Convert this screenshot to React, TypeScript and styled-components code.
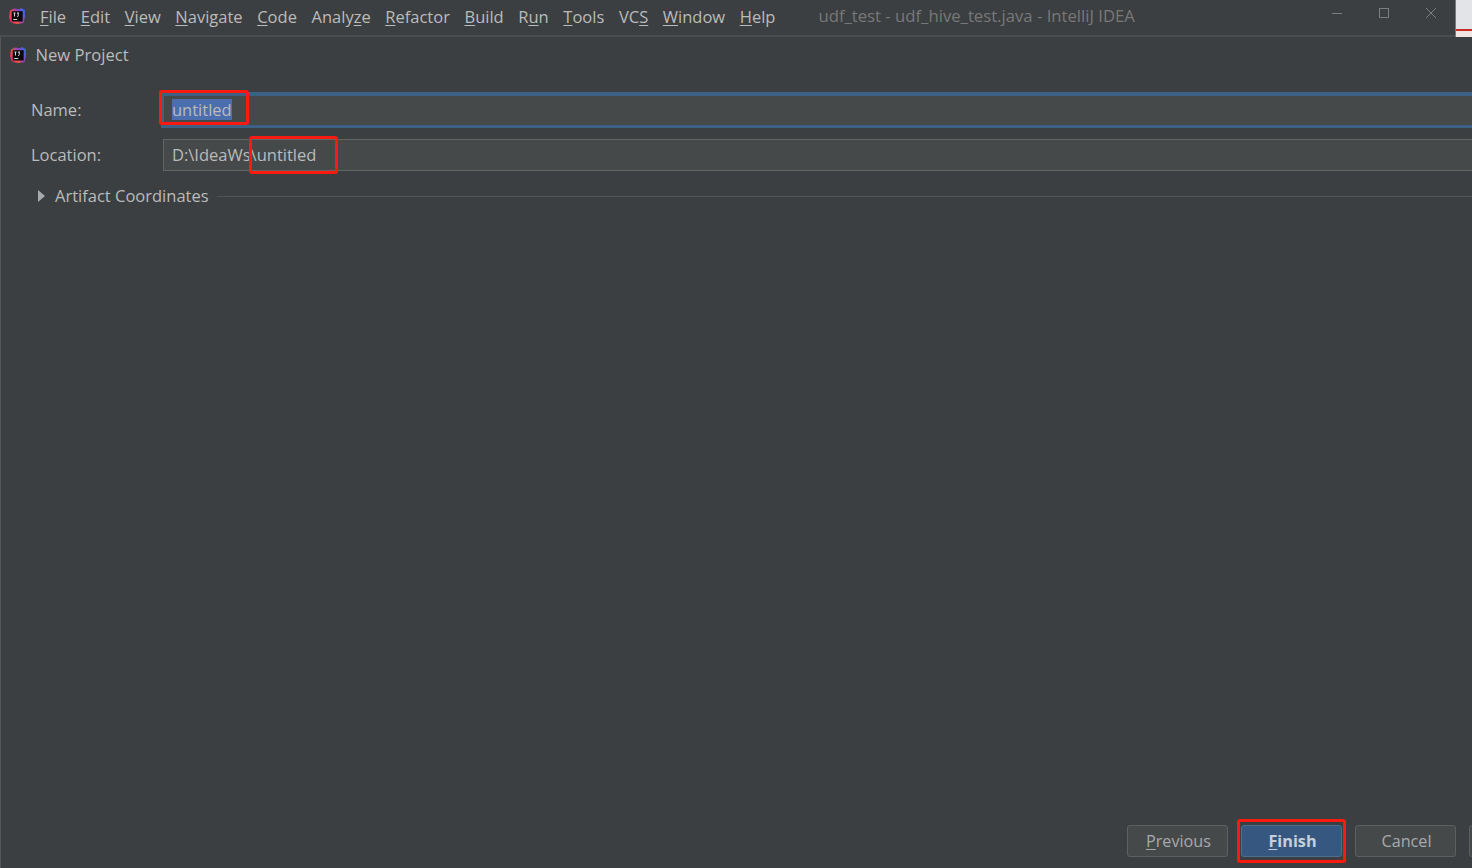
import React from "react";
import styled, { createGlobalStyle } from "styled-components";

const Global = createGlobalStyle`
  html, body { margin: 0; padding: 0; background: #3c3f41; }
  body { font-family: "Open Sans", "Noto Sans", "Liberation Sans", sans-serif; }
`;

const Page = styled.div`
  width: 1472px;
  height: 868px;
  overflow: hidden;
  display: flex;
  flex-direction: column;
  background: #3c3f41;
  color: #bbbbbb;
  font-size: 16.5px;
`;

const TitleBar = styled.header`
  height: 35px;
  flex: none;
  display: flex;
  align-items: flex-start;
  border-bottom: 2px solid #4a4c4e;
  padding-left: 9px;
`;

const AppIcon = styled.svg`
  width: 16px;
  height: 16px;
  flex: none;
  display: block;
`;

const BarIconSlot = styled.div`
  margin-top: 8px;
  width: 31px;
  flex: none;
`;

const Menu = styled.nav`
  display: flex;
  gap: 14.6px;
  height: 33px;
  align-items: center;
`;

const MenuItem = styled.span`
  white-space: nowrap;
`;

const Key = styled.span`
  text-decoration: underline;
  text-underline-offset: 2px;
  text-decoration-thickness: 1px;
`;

const WindowTitle = styled.span`
  margin-left: 43px;
  color: #787878;
  white-space: nowrap;
  line-height: 31px;
  font-size: 16.7px;
`;

const WindowControls = styled.div`
  margin-left: auto;
  display: flex;
  gap: 37px;
  margin-top: 8px;
  margin-right: 19px;
`;

const ControlIcon = styled.svg`
  width: 10px;
  height: 10px;
  display: block;
  stroke: #7b7d7f;
  stroke-width: 1;
  fill: none;
`;

const BehindWindow = styled.div`
  width: 17px;
  height: 37px;
  flex: none;
  margin-bottom: -2px;
  position: relative;
  background: linear-gradient(#e2e4e8 0 29px, #cc2b25 29px 31px, #efe6e4 31px);
  border-left: 1px solid #77797b;
  box-sizing: border-box;
`;

const Dialog = styled.main`
  flex: 1;
  min-height: 0;
  display: flex;
  flex-direction: column;
  border-left: 1px solid #55585a;
`;

const DialogHeader = styled.div`
  display: flex;
  align-items: center;
  gap: 9.5px;
  height: 36px;
  padding-left: 9px;
  font-size: 16.6px;
`;

const DialogTitle = styled.span`
  padding-bottom: 2px;
`;

const Form = styled.div`
  margin-top: 19px;
  display: flex;
  flex-direction: column;
  padding-left: 30px;
`;

const Row = styled.div<{ $top?: number }>`
  display: flex;
  align-items: center;
  margin-top: ${(p) => p.$top ?? 0}px;
`;

const Label = styled.label`
  width: 130px;
  flex: none;
  padding-bottom: 2px;
`;

const FocusField = styled.div`
  position: relative;
  flex: 1;
  height: 27px;
  margin-right: -20px;
  background: #45494a;
  border: 3px solid #3d6185;
  border-width: 4px 3px 3px;
  padding: 0 0 2px 8px;
  display: flex;
  align-items: center;
`;

const Field = styled.div`
  position: relative;
  flex: 1;
  height: 28px;
  margin-left: 2px;
  margin-right: -20px;
  background: #45494a;
  border: 1px solid #646464;
  padding: 0 0 2px 8px;
  display: flex;
  align-items: center;
`;

const Selected = styled.span`
  background: #4b6eaf;
  line-height: 21px;
`;

const Callout = styled.span<{ $l: number; $t: number; $w: number; $h: number }>`
  position: absolute;
  left: ${(p) => p.$l}px;
  top: ${(p) => p.$t}px;
  width: ${(p) => p.$w}px;
  height: ${(p) => p.$h}px;
  box-sizing: border-box;
  border: 3px solid #fb1a10;
  border-radius: 3px;
  pointer-events: none;
`;

const Section = styled.div`
  margin-top: 13px;
  margin-left: 7px;
  display: flex;
  align-items: center;
  margin-right: -30px;
`;

const Arrow = styled.span`
  width: 0;
  height: 0;
  border-left: 7px solid #a7a9aa;
  border-top: 6px solid transparent;
  border-bottom: 6px solid transparent;
  margin: 0 10px 2px 0;
  flex: none;
`;

const SectionTitle = styled.span`
  padding-bottom: 2px;
`;

const SectionLine = styled.span`
  flex: 1;
  height: 1px;
  background: #515355;
  margin-left: 8px;
`;

const Footer = styled.footer`
  margin-top: auto;
  display: flex;
  justify-content: flex-end;
  gap: 13px;
  margin-right: -98px;
  padding-bottom: 11px;
`;

const Button = styled.button<{ $primary?: boolean }>`
  position: relative;
  width: 101px;
  height: 32px;
  flex: none;
  padding: 0 0 1px 2px;
  box-sizing: border-box;
  font: inherit;
  font-size: 16.2px;
  font-weight: ${(p) => (p.$primary ? 700 : 400)};
  color: ${(p) => (p.$primary ? "#c5d0dc" : "#a8aaac")};
  background: ${(p) => (p.$primary ? "#365880" : "#45494a")};
  border: 1px solid ${(p) => (p.$primary ? "#4c708c" : "#5e6060")};
  border-radius: 3px;
`;

const Logo = ({ id }: { id: string }) => (
  <AppIcon viewBox="0 0 16 16">
    <defs>
      <linearGradient id={id} x1="0" y1="0.7" x2="1" y2="0.2">
        <stop offset="0" stopColor="#e8277f" />
        <stop offset="0.3" stopColor="#f0553a" />
        <stop offset="0.55" stopColor="#a53fb0" />
        <stop offset="1" stopColor="#2f6be8" />
      </linearGradient>
    </defs>
    <path d="M1 2.500 5 .5l5 .8L12 0l3.800 2 .2 7-1.500 6-5.500 1-4-.5-3.500-1.500L0 9z" fill={`url(#${id})`} />
    <rect x="2.700" y="3.200" width="11" height="10.300" fill="#0a0a0c" />
    <path d="M4.500 5h2M5.500 5v3.500M8 5h2M9.200 5v2.800q0 .8-1 .8" stroke="#d8d8d8" strokeWidth="1" fill="none" />
    <rect x="4.300" y="11" width="4" height="1" fill="#d8d8d8" />
  </AppIcon>
);

const menu: [string, string, string][] = [
  ["", "F", "ile"],
  ["", "E", "dit"],
  ["", "V", "iew"],
  ["", "N", "avigate"],
  ["", "C", "ode"],
  ["Analy", "z", "e"],
  ["", "R", "efactor"],
  ["", "B", "uild"],
  ["R", "u", "n"],
  ["", "T", "ools"],
  ["VC", "S", ""],
  ["", "W", "indow"],
  ["", "H", "elp"],
];

export default function App() {
  return (
    <Page>
      <Global />
      <TitleBar>
        <BarIconSlot>
          <Logo id="logoA" />
        </BarIconSlot>
        <Menu>
          {menu.map(([a, k, b]) => (
            <MenuItem key={a + k + b}>
              {a}
              <Key>{k}</Key>
              {b}
            </MenuItem>
          ))}
        </Menu>
        <WindowTitle>udf_test - udf_hive_test.java - IntelliJ IDEA</WindowTitle>
        <WindowControls>
          <ControlIcon viewBox="0 0 10 10">
            <path d="M0 5.500h10" />
          </ControlIcon>
          <ControlIcon viewBox="0 0 10 10">
            <rect x="0.500" y="0.500" width="9" height="9" />
          </ControlIcon>
          <ControlIcon viewBox="0 0 10 10">
            <path d="M0 0l10 10M10 0L0 10" />
          </ControlIcon>
        </WindowControls>
        <BehindWindow />
      </TitleBar>
      <Dialog>
        <DialogHeader>
          <Logo id="logoB" />
          <DialogTitle>New Project</DialogTitle>
        </DialogHeader>
        <Form>
          <Row>
            <Label>Name:</Label>
            <FocusField>
              <Selected>untitled</Selected>
              <Callout $l={-5} $t={-6} $w={90} $h={35} />
            </FocusField>
          </Row>
          <Row $top={11}>
            <Label>Location:</Label>
            <Field>
              D:\IdeaWs\untitled
              <Callout $l={85} $t={-4} $w={89} $h={38} />
            </Field>
          </Row>
          <Section>
            <Arrow />
            <SectionTitle>Artifact Coordinates</SectionTitle>
            <SectionLine />
          </Section>
        </Form>
        <Footer>
          <Button>
            <Key>P</Key>revious
          </Button>
          <Button $primary>
            <Key>F</Key>inish
            <Callout $l={-5} $t={-7} $w={109} $h={44} />
          </Button>
          <Button>Cancel</Button>
          <Button />
        </Footer>
      </Dialog>
    </Page>
  );
}
